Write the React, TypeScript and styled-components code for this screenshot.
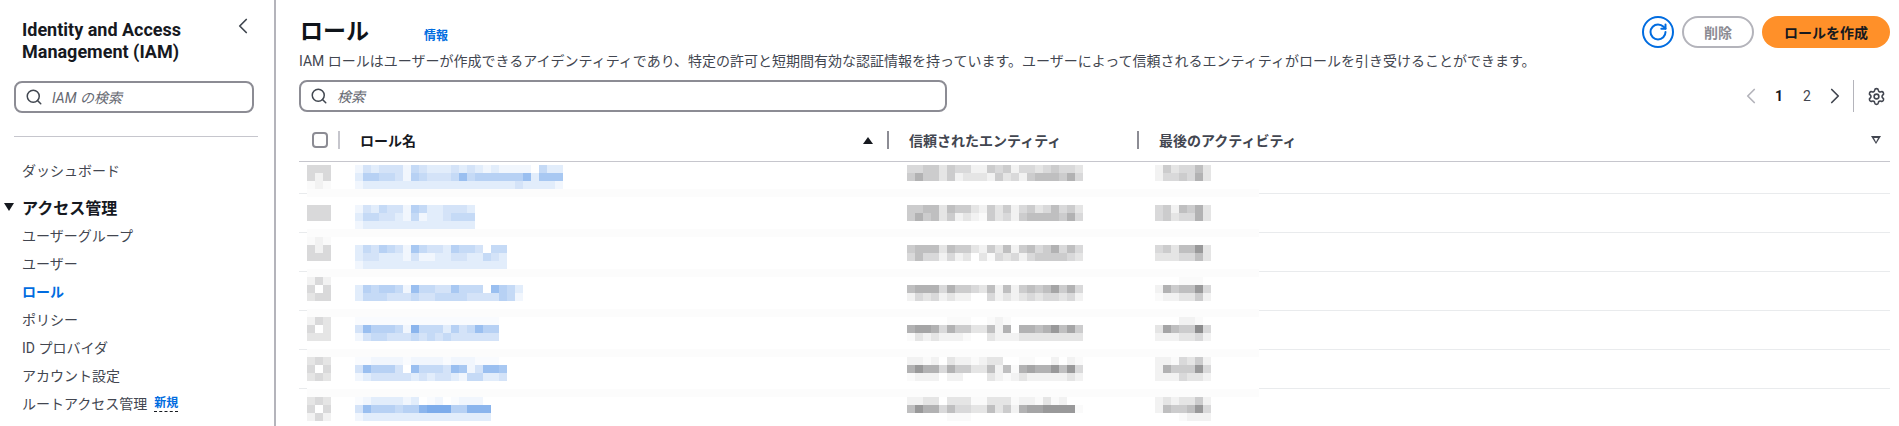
import React from "react";
import styled, { createGlobalStyle } from "styled-components";
import { ChevronLeft, ChevronRight, RotateCw, Search, Settings } from "lucide-react";

const GlobalStyle = createGlobalStyle`
  html, body {
    margin: 0;
    padding: 0;
    background: #fff;
    overflow: hidden;
  }
  body {
    font-family: Roboto, "Noto Sans CJK JP", sans-serif;
    font-size: 14px;
    color: #16191f;
  }
`;

const Page = styled.div`
  display: flex;
  width: 1899px;
  height: 426px;
  overflow: hidden;
`;

const Sidebar = styled.aside`
  flex: none;
  box-sizing: border-box;
  width: 276px;
  height: 426px;
  padding: 19px 16px 0 14px;
  border-right: 2px solid #b4b4bb;
`;

const SideHead = styled.div`
  display: flex;
  justify-content: space-between;
  padding: 0 0 0 8px;
  height: 62px;
`;

const SideTitle = styled.h2`
  margin: 0;
  font-size: 18px;
  line-height: 22px;
  font-weight: 700;
  color: #16191f;
`;

const CollapseButton = styled.span`
  display: flex;
  margin: -6px 2px 0 0;
  color: #414750;
  height: 26px;
`;

const SearchBox = styled.div<{ $width: number }>`
  display: flex;
  align-items: center;
  gap: 9px;
  box-sizing: border-box;
  width: ${(p) => p.$width}px;
  height: 32px;
  padding: 0 9px;
  border: 2px solid #8c8c94;
  border-radius: 8px;
  color: #414750;
  font-size: 14px;
  font-style: italic;

  span {
    color: #656871;
  }
`;

const SideDivider = styled.hr`
  width: 244px;
  margin: 23px 0 0;
  border: none;
  border-top: 1px solid #c6c6cd;
`;

const NavList = styled.nav`
  display: flex;
  flex-direction: column;
  margin-top: 19px;
`;

const NavItem = styled.a<{ $active?: boolean }>`
  display: flex;
  align-items: center;
  gap: 7px;
  height: 28px;
  padding-left: 8px;
  color: ${(p) => (p.$active ? "#006ce0" : "#424650")};
  font-weight: ${(p) => (p.$active ? 700 : 400)};
  font-size: 14px;
`;

const NavSection = styled.div`
  position: relative;
  display: flex;
  align-items: center;
  height: 28px;
  margin-top: 9px;
  padding-left: 8px;
  font-size: 16px;
  font-weight: 700;
  color: #16191f;

  &::before {
    content: "";
    position: absolute;
    left: -10px;
    top: 10px;
    border-style: solid;
    border-width: 8px 5px 0;
    border-color: #16191f transparent transparent;
  }
`;

const NewBadge = styled.span`
  color: #006ce0;
  font-size: 12px;
  font-weight: 600;
  line-height: 16px;
  border-bottom: 1px dashed #16191f;
`;

const Main = styled.main`
  flex: 1;
  min-width: 0;
  padding: 16px 9px 0 23px;
`;

const TopRow = styled.div`
  display: flex;
  align-items: flex-start;
  justify-content: space-between;
  height: 32px;
`;

const TitleGroup = styled.div`
  display: flex;
  align-items: center;
  gap: 55px;
`;

const Title = styled.h1`
  margin: 0 0 0 1px;
  font-size: 23px;
  line-height: 32px;
  font-weight: 700;
  color: #0f141a;
`;

const InfoLink = styled.a`
  color: #006ce0;
  font-size: 12px;
  font-weight: 600;
  margin-top: 4px;
`;

const Actions = styled.div`
  display: flex;
  gap: 8px;
`;

const RefreshButton = styled.button`
  display: flex;
  align-items: center;
  justify-content: center;
  width: 32px;
  height: 32px;
  padding: 0;
  border: 2px solid #006ce0;
  border-radius: 50%;
  background: #fff;
  color: #006ce0;
`;

const PillButton = styled.button<{ $primary?: boolean }>`
  box-sizing: border-box;
  width: ${(p) => (p.$primary ? 128 : 72)}px;
  height: 32px;
  padding: 0;
  border: ${(p) => (p.$primary ? "none" : "2px solid #b4b4bb")};
  border-radius: 16px;
  background: ${(p) => (p.$primary ? "#ff9029" : "#fff")};
  color: ${(p) => (p.$primary ? "#16191f" : "#8c8c94")};
  font-family: inherit;
  font-size: 14px;
  font-weight: 700;
`;

const Description = styled.p`
  margin: 2px 0 0;
  height: 22px;
  font-size: 14px;
  line-height: 22px;
  color: #424650;
  white-space: nowrap;
`;

const FilterRow = styled.div`
  display: flex;
  align-items: center;
  justify-content: space-between;
  height: 32px;
  margin-top: 8px;
`;

const Pager = styled.div`
  display: flex;
  align-items: center;
  color: #424650;
`;

const PagerArrow = styled.span<{ $disabled?: boolean }>`
  display: flex;
  justify-content: center;
  width: 28px;
  color: ${(p) => (p.$disabled ? "#b4b4bb" : "#424650")};
`;

const PageNumber = styled.span<{ $current?: boolean }>`
  width: 28px;
  text-align: center;
  font-size: 14px;
  font-weight: ${(p) => (p.$current ? 700 : 400)};
  color: ${(p) => (p.$current ? "#16191f" : "#424650")};
`;

const PagerDivider = styled.span`
  width: 1px;
  height: 32px;
  margin: 0 13px 0 4px;
  background: #b4b4bb;
`;

const GearButton = styled.span`
  display: flex;
  margin-right: 4px;
  color: #424650;
`;

const Table = styled.section`
  margin-top: 10px;
`;

const HeadRow = styled.div`
  display: grid;
  grid-template-columns: 61px 527px 250px 1fr;
  height: 39px;
  border-bottom: 1px solid #c6c6cd;
  font-size: 14px;
  font-weight: 700;
  color: #424650;
`;

const HeadCell = styled.div<{ $dark?: boolean }>`
  display: flex;
  align-items: center;
  justify-content: space-between;
  padding: 0 0 3px 0;
  color: ${(p) => (p.$dark ? "#16191f" : "#424650")};
`;

const CheckCell = styled.div`
  display: flex;
  align-items: center;
  padding: 0 0 4px 13px;
`;

const Checkbox = styled.span`
  box-sizing: border-box;
  width: 16px;
  height: 16px;
  border: 2px solid #8c8c94;
  border-radius: 4px;
`;

const ColumnRule = styled.span<{ $light?: boolean }>`
  width: 2px;
  height: 18px;
  margin-right: ${(p) => (p.$light ? 0 : 20)}px;
  background: ${(p) => (p.$light ? "#c6c6cd" : "#8c8c94")};
`;

const CheckRule = styled(ColumnRule)`
  margin-left: 10px;
  margin-right: 0;
`;

const SortUp = styled.span`
  margin-right: 14px;
  border-style: solid;
  border-width: 0 5px 7px;
  border-color: transparent transparent #16191f;
`;

const FilterDown = styled.span`
  position: relative;
  margin-right: 9px;
  border-style: solid;
  border-width: 8px 5px 0;
  border-color: #424650 transparent transparent;

  &::after {
    content: "";
    position: absolute;
    left: -2.5px;
    top: -6.5px;
    border-style: solid;
    border-width: 4px 2.5px 0;
    border-color: #fff transparent transparent;
  }
`;

const HeadLabel = styled.span`
  flex: 1;
`;

const HeadLine = styled.div`
  display: flex;
  align-items: center;
  width: 100%;
`;

const Body = styled.div`
  position: relative;
`;

const Row = styled.div<{ $first?: boolean }>`
  box-sizing: border-box;
  height: ${(p) => (p.$first ? 32 : 39)}px;
  border-bottom: 1px solid #e9ebed;
`;

/* the pixelated cell contents lie over the rows */
const MosaicLayer = styled.div`
  position: absolute;
  top: 3px;
  left: 8px;
  width: 952px;
  height: 262px;
  overflow: hidden;
  background: #fff;
`;

const MosaicRow = styled.div`
  display: grid;
  grid-template-columns: 48px 552px 248px 1fr;
`;

const MosaicBand = styled.div`
  height: 8px;
  background: #fcfcfc;
`;

const PixelLine = styled.div`
  display: flex;
  height: 8px;
`;

const PixelDot = styled.span`
  flex: none;
  width: 8px;
  height: 8px;
`;

const shade = (ch: string, tone: "blue" | "gray") => {
  const v = ch === "a" ? 0.4 : Number(ch);
  if (tone === "blue") {
    return `rgb(${255 - v * 14.5}, ${255 - v * 9.2}, ${255 - v * 2.2})`;
  }
  const g = Math.round(255 - v * 12.8);
  return `rgb(${g}, ${g}, ${g + (v > 2 ? 1 : 0)})`;
};

const Pixels = ({ lines, tone }: { lines: string[]; tone: "blue" | "gray" }) => (
  <div>
    {lines.map((line, i) => (
      <PixelLine key={i}>
        {line.split("").map((ch, j) => (
          <PixelDot key={j} style={{ background: shade(ch, tone) }} />
        ))}
      </PixelLine>
    ))}
  </div>
);

interface IMosaic {
  icon: string[];
  name: string[];
  entity: string[];
  activity: string[];
}

const mosaics: IMosaic[] = [
  {
    icon: ["333", "313", "a1a"],
    name: ["13233314322232321211110422", "25544315433347455555572666", "12222222222222222222322221"],
    entity: ["3344243311434133234332", "4644241222142314555463", "0000000000000000000000"],
    activity: ["1423352", "1334362", "0000000"],
  },
  {
    icon: ["000", "333", "333", "000"],
    name: ["000000000000000", "132433154223332", "244332141223444", "122222222222222"],
    entity: ["0000000000000000000000", "4455254421424134235342", "464524121a423145555463", "0000000000000000000000"],
    activity: ["0000000", "3415462", "3423362", "0000000"],
  },
  {
    icon: ["a1a", "313", "333", "000"],
    name: ["0000000000000000000", "2435431643325443044", "2332221311223322432", "1222222222222222222"],
    entity: ["0000000000000000000000", "4555254421425145346353", "3533131202a32313444432", "0000000000000000000000"],
    activity: ["0000000", "3425582", "2223352", "0000000"],
  },
  {
    icon: ["131", "303", "233", "000"],
    name: ["000000000000000000000", "254554174433644407542", "244433343344443333541", "000000000000000000000"],
    entity: ["0000000000000000000000", "5666364432515145457463", "1323121100312123233231", "0000000000000000000000"],
    activity: ["000aaa0", "1645583", "a112241", "0000000"],
  },
  {
    icon: ["132", "302", "222", "000"],
    name: ["aaaaaaaaaaaaaaaaaa", "375554184442534755", "134433343434333333", "000000000000000000"],
    entity: ["00000aaa00a1a000000000", "6776364422516066568574", "a212111a00211122222222", "0000000000000000000000"],
    activity: ["00011a0", "2754493", "1112231", "0000000"],
  },
  {
    icon: ["232", "303", "232", "000"],
    name: ["aa1111a1111a111aaa0", "3755530744437613776", "1233333232332144223", "0000000000000000000"],
    entity: ["11a10211a12200aa00101a", "6866364422515a67668583", "a11101100021a121111121", "0000000000000000000000"],
    activity: ["11a3241", "1644483", "1113221", "0000000"],
  },
  {
    icon: ["232", "303", "131", "000"],
    name: ["a12222120a10a111", "37555455899955888", "12222222222222222", "00000000000000000"],
    entity: ["11220222aa222a11a2a100", "586635332252416778888a", "00000aaa00000000000000", "0000000000000000000000"],
    activity: ["1212241", "1544583", "000a111", "0000000"],
  },
];

const App = () => {
  return (
    <Page lang="ja">
      <GlobalStyle />
      <Sidebar>
        <SideHead>
          <SideTitle>
            Identity and Access
            <br />
            Management (IAM)
          </SideTitle>
          <CollapseButton>
            <ChevronLeft size={26} strokeWidth={1.6} />
          </CollapseButton>
        </SideHead>
        <SearchBox $width={240}>
          <Search size={18} strokeWidth={2} />
          <span>IAM の検索</span>
        </SearchBox>
        <SideDivider />
        <NavList>
          <NavItem>ダッシュボード</NavItem>
          <NavSection>アクセス管理</NavSection>
          <NavItem>ユーザーグループ</NavItem>
          <NavItem>ユーザー</NavItem>
          <NavItem $active>ロール</NavItem>
          <NavItem>ポリシー</NavItem>
          <NavItem>ID プロバイダ</NavItem>
          <NavItem>アカウント設定</NavItem>
          <NavItem>
            ルートアクセス管理
            <NewBadge>新規</NewBadge>
          </NavItem>
        </NavList>
      </Sidebar>
      <Main>
        <TopRow>
          <TitleGroup>
            <Title>ロール</Title>
            <InfoLink>情報</InfoLink>
          </TitleGroup>
          <Actions>
            <RefreshButton>
              <RotateCw size={20} strokeWidth={2.4} />
            </RefreshButton>
            <PillButton>削除</PillButton>
            <PillButton $primary>ロールを作成</PillButton>
          </Actions>
        </TopRow>
        <Description>
          IAM ロールはユーザーが作成できるアイデンティティであり、特定の許可と短期間有効な認証情報を持っています。ユーザーによって信頼されるエンティティがロールを引き受けることができます。
        </Description>
        <FilterRow>
          <SearchBox $width={648}>
            <Search size={18} strokeWidth={2} />
            <span>検索</span>
          </SearchBox>
          <Pager>
            <PagerArrow $disabled>
              <ChevronLeft size={26} strokeWidth={1.6} />
            </PagerArrow>
            <PageNumber $current>1</PageNumber>
            <PageNumber>2</PageNumber>
            <PagerArrow>
              <ChevronRight size={26} strokeWidth={1.6} />
            </PagerArrow>
            <PagerDivider />
            <GearButton>
              <Settings size={19} strokeWidth={2} />
            </GearButton>
          </Pager>
        </FilterRow>
        <Table>
          <HeadRow>
            <CheckCell>
              <Checkbox />
              <CheckRule $light />
            </CheckCell>
            <HeadCell $dark>
              <HeadLine>
                <HeadLabel>ロール名</HeadLabel>
                <SortUp />
              </HeadLine>
            </HeadCell>
            <HeadCell>
              <HeadLine>
                <ColumnRule />
                <HeadLabel>信頼されたエンティティ</HeadLabel>
              </HeadLine>
            </HeadCell>
            <HeadCell>
              <HeadLine>
                <ColumnRule />
                <HeadLabel>最後のアクティビティ</HeadLabel>
                <FilterDown />
              </HeadLine>
            </HeadCell>
          </HeadRow>
          <Body>
            <Row $first />
            <Row />
            <Row />
            <Row />
            <Row />
            <Row />
            <Row />
            <MosaicLayer>
              {mosaics.map((m, i) => (
                <React.Fragment key={i}>
                  <MosaicRow>
                    <Pixels lines={m.icon} tone="gray" />
                    <Pixels lines={m.name} tone="blue" />
                    <Pixels lines={m.entity} tone="gray" />
                    <Pixels lines={m.activity} tone="gray" />
                  </MosaicRow>
                  <MosaicBand />
                </React.Fragment>
              ))}
            </MosaicLayer>
          </Body>
        </Table>
      </Main>
    </Page>
  );
};

export default App;
